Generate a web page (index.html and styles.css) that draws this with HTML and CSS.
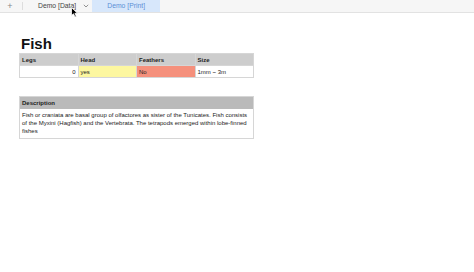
FILE: index.html
```html
<!DOCTYPE html>
<html lang="en">

<head>
    <meta charset="UTF-8">
    <title>Demo [Print]</title>
    <link rel="stylesheet" href="styles.css">
</head>

<body>
    <nav class="tabs">
        <span class="add">+</span>
        <span class="sep"></span>
        <span class="tab data">Demo [Data]</span>
        <span class="chev">
            <svg width="6" height="4" viewBox="0 0 6 4"><path d="M0.8 0.8 L3 3 L5.2 0.8" fill="none" stroke="#777" stroke-width="0.8"/></svg>
        </span>
        <span class="tab active">Demo [Print]</span>
        <svg class="cursor" width="8" height="11" viewBox="0 0 8 11"><path d="M0.5 0.5 L0.5 8.5 L2.5 6.8 L4 10 L5.3 9.4 L3.9 6.3 L6.5 6.3 Z" fill="#000" stroke="#fff" stroke-width="0.8"/></svg>
    </nav>

    <main class="sheet">
        <h1>Fish</h1>
        <table class="props">
            <tr>
                <th>Legs</th>
                <th>Head</th>
                <th>Feathers</th>
                <th>Size</th>
            </tr>
            <tr>
                <td class="num">0</td>
                <td class="yes">yes</td>
                <td class="no">No</td>
                <td>1mm ~ 3m</td>
            </tr>
        </table>

        <section class="desc">
            <h2>Description</h2>
            <p>Fish or craniata are basal group of olfactores as sister of the Tunicates. Fish consists of the Myxini (Hagfish) and the Vertebrata. The tetrapods emerged within lobe-finned fishes</p>
        </section>
    </main>
</body>

</html>
```

FILE: styles.css
```css
body {
    margin: 0;
    background: #fff;
    font-family: "Liberation Sans", Arial, sans-serif;
}

.tabs {
    position: relative;
    display: flex;
    align-items: center;
    height: 12px;
    background: #f6f6f6;
    border-bottom: 1px solid #e2e2e2;
    font-size: 6.8px;
    color: #444;
}

.add {
    width: 12px;
    margin-left: 4px;
    text-align: center;
    font-size: 9px;
    color: #888;
}

.sep {
    width: 1px;
    height: 8px;
    background: #ddd;
    margin-left: 6px;
}

.tab {
    height: 12px;
    line-height: 12px;
}

.data {
    margin-left: 15px;
}

.chev {
    display: flex;
    margin: 0 3px 0 7px;
}

.active {
    width: 68px;
    text-align: center;
    background: #d7e7fb;
    color: #5b8fd6;
}

.cursor {
    position: absolute;
    left: 71px;
    top: 7px;
}

.sheet {
    width: 235px;
    margin-left: 19px;
}

h1 {
    font-size: 15px;
    margin: 23px 0 1px 2px;
    line-height: 16px;
    color: #111;
}

.props {
    width: 100%;
    border-collapse: collapse;
    table-layout: fixed;
    font-size: 6px;
}

.props th,
.props td {
    height: 11px;
    padding: 0 2px;
    border: 1px solid #d6d6d6;
    text-align: left;
}

.props th {
    background: #cdcdcd;
    color: #222;
}

.props td {
    color: #222;
}

.props .num {
    text-align: right;
}

.yes {
    background: #fdf7a0;
}

.no {
    background: #f5907c;
}

.desc {
    margin-top: 18px;
    border: 1px solid #d6d6d6;
    font-size: 6px;
    color: #222;
}

.desc h2 {
    margin: 0;
    height: 12px;
    line-height: 12px;
    padding: 0 2px;
    font-size: 6px;
    background: #bababa;
}

.desc p {
    margin: 0;
    padding: 2px 2px 3px;
    line-height: 8px;
}
```
